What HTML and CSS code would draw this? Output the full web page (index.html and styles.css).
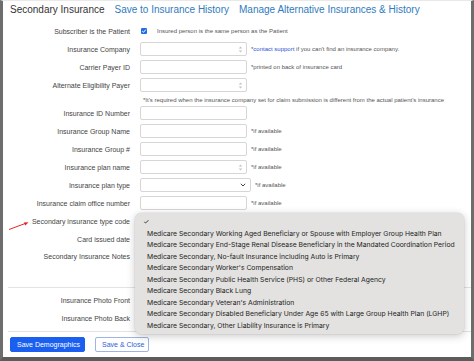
FILE: index.html
```html
<!DOCTYPE html>
<html>
<head>
<meta charset="utf-8">
<link rel="stylesheet" href="styles.css">
</head>
<body>
<div class="window">
  <div class="head">
    <span class="title">Secondary Insurance</span>
    <a class="hlink">Save to Insurance History</a>
    <a class="hlink">Manage Alternative Insurances &amp; History</a>
  </div>

  <div class="form">
    <div class="row">
      <div class="lbl">Subscriber is the Patient</div>
      <div class="fld">
        <span class="cb"><svg viewBox="0 0 6 6" width="6" height="6"><path d="M1.2 3.1 L2.5 4.3 L4.8 1.6" fill="none" stroke="#fff" stroke-width="1"/></svg></span>
        <span class="note">Insured person is the same person as the Patient</span>
      </div>
    </div>
    <div class="row">
      <div class="lbl">Insurance Company</div>
      <div class="fld"><span class="inp"><svg class="ud" viewBox="0 0 5 7" width="5" height="7"><path d="M2.5 0.5 L4.3 2.6 H0.7 Z M2.5 6.5 L4.3 4.4 H0.7 Z" fill="#c4c4c4"/></svg></span><span class="note"><i>*</i><span class="blue">contact support</span> if you can't find an insurance company.</span></div>
    </div>
    <div class="row">
      <div class="lbl">Carrier Payer ID</div>
      <div class="fld"><span class="inp"></span><span class="note">*printed on back of insurance card</span></div>
    </div>
    <div class="row">
      <div class="lbl">Alternate Eligibility Payer</div>
      <div class="fld"><span class="inp"><svg class="ud" viewBox="0 0 5 7" width="5" height="7"><path d="M2.5 0.5 L4.3 2.6 H0.7 Z M2.5 6.5 L4.3 4.4 H0.7 Z" fill="#c4c4c4"/></svg></span></div>
    </div>
    <div class="subnote">*It's required when the insurance company set for claim submission is different from the actual patient's insurance</div>
    <div class="row">
      <div class="lbl">Insurance ID Number</div>
      <div class="fld"><span class="inp"></span></div>
    </div>
    <div class="row">
      <div class="lbl">Insurance Group Name</div>
      <div class="fld"><span class="inp"></span><span class="note">*if available</span></div>
    </div>
    <div class="row">
      <div class="lbl">Insurance Group #</div>
      <div class="fld"><span class="inp"></span><span class="note">*if available</span></div>
    </div>
    <div class="row">
      <div class="lbl">Insurance plan name</div>
      <div class="fld"><span class="inp"><svg class="ud" viewBox="0 0 5 7" width="5" height="7"><path d="M2.5 0.5 L4.3 2.6 H0.7 Z M2.5 6.5 L4.3 4.4 H0.7 Z" fill="#c4c4c4"/></svg></span><span class="note">*if available</span></div>
    </div>
    <div class="row">
      <div class="lbl">Insurance plan type</div>
      <div class="fld"><span class="inp sel"><svg class="chev" viewBox="0 0 6 4" width="6" height="4"><path d="M0.8 0.8 L3 3 L5.2 0.8" fill="none" stroke="#444" stroke-width="1"/></svg></span><span class="note">*if available</span></div>
    </div>
    <div class="row">
      <div class="lbl">Insurance claim office number</div>
      <div class="fld"><span class="inp"></span><span class="note">*if available</span></div>
    </div>
    <div class="row">
      <div class="lbl">Secondary insurance type code</div>
      <div class="fld"><span class="inp sel"></span></div>
    </div>
    <div class="row">
      <div class="lbl">Card issued date</div>
      <div class="fld"><span class="inp"></span></div>
    </div>
    <div class="row notes">
      <div class="lbl">Secondary Insurance Notes</div>
      <div class="fld"><span class="ta"></span></div>
    </div>
  </div>

  <div class="form photos">
    <div class="row">
      <div class="lbl">Insurance Photo Front</div>
      <div class="fld"></div>
    </div>
    <div class="row">
      <div class="lbl">Insurance Photo Back</div>
      <div class="fld"></div>
    </div>
  </div>

  <div class="actions">
    <button class="btn primary">Save Demographics</button>
    <button class="btn outline">Save &amp; Close</button>
  </div>

  <svg class="arrow" viewBox="0 0 22 10" width="22" height="10"><path d="M1 8.5 L18 2.2" stroke="#e0282a" stroke-width="1" fill="none"/><path d="M20.5 1.2 L15.8 1.4 L17.4 4.6 Z" fill="#e0282a"/></svg>

  <div class="menu">
    <div class="mi check">✓</div>
    <div class="mi">Medicare Secondary Working Aged Beneficiary or Spouse with Employer Group Health Plan</div>
    <div class="mi">Medicare Secondary End-Stage Renal Disease Beneficiary in the Mandated Coordination Period</div>
    <div class="mi">Medicare Secondary, No-fault Insurance including Auto is Primary</div>
    <div class="mi">Medicare Secondary Worker's Compensation</div>
    <div class="mi">Medicare Secondary Public Health Service (PHS) or Other Federal Agency</div>
    <div class="mi">Medicare Secondary Black Lung</div>
    <div class="mi">Medicare Secondary Veteran's Administration</div>
    <div class="mi">Medicare Secondary Disabled Beneficiary Under Age 65 with Large Group Health Plan (LGHP)</div>
    <div class="mi">Medicare Secondary, Other Liability Insurance is Primary</div>
  </div>
</div>
</body>
</html>
```

FILE: styles.css
```css
* { box-sizing: border-box; }
html, body { margin: 0; padding: 0; }
body {
  width: 474px;
  height: 361px;
  overflow: hidden;
  font-family: "Liberation Sans", Arial, sans-serif;
  background: #5e5e5e;
}
.window {
  position: relative;
  width: 474px;
  height: 361px;
  background: #fff;
  border-left: 3px solid #6d6d6d;
  border-right: 3px solid #6d6d6d;
  border-top: 1px solid #e9e9e9;
  border-bottom: 4px solid #5c5c5c;
}
.head {
  display: flex;
  align-items: center;
  gap: 10px;
  height: 16px;
  padding: 2px 0 0 7px;
  font-size: 10px;
  line-height: 12px;
}
.title { color: #333; }
.hlink { color: #2f7bc0; }

.form {
  margin-top: 5px;
}
.row {
  display: grid;
  grid-template-columns: 127px 1fr;
  column-gap: 10px;
  height: 18px;
  align-items: center;
}
.lbl {
  text-align: right;
  font-size: 7px;
  color: #444;
  white-space: nowrap;
}
.fld {
  display: flex;
  align-items: center;
  gap: 4px;
  min-width: 0;
}
.inp {
  position: relative;
  display: flex;
  align-items: center;
  justify-content: flex-end;
  width: 107px;
  height: 14px;
  border: 1px solid #d6d6d6;
  border-radius: 2px;
  background: #fff;
  padding-right: 3px;
  flex: none;
}
.inp.sel { width: 111px; padding-right: 4px; }
.ud { display: block; }
.chev { display: block; }
.note {
  font-size: 6px;
  color: #555;
  white-space: nowrap;
}
.note i { font-style: normal; }
.blue { color: #2753d6; }
.cb {
  display: flex;
  align-items: center;
  justify-content: center;
  width: 6px;
  height: 6px;
  margin: 0 6px 0 1px;
  border-radius: 1px;
  background: #1f6fe6;
}
.cb svg { display: block; }
.subnote {
  height: 10px;
  padding: 3px 0 0 140px;
  font-size: 6px;
  line-height: 7px;
  color: #555;
  white-space: nowrap;
}
.row.notes {
  height: 36px;
  align-items: start;
}
.row.notes .lbl { line-height: 18px; }
.ta {
  display: block;
  width: 200px;
  height: 32px;
  margin-top: 2px;
  border: 1px solid #d6d6d6;
  border-radius: 2px;
}
.photos {
  margin: 3px 0 0 5px;
  padding: 3px 0 4px;
  border-top: 1px solid #e3e3e3;
  border-bottom: 1px solid #e3e3e3;
}
.photos .row { grid-template-columns: 122px 1fr; }
.actions {
  display: flex;
  gap: 10px;
  padding: 5px 0 0 7px;
}
.btn {
  height: 15px;
  padding: 0 6px;
  font-family: "Liberation Sans", Arial, sans-serif;
  font-size: 7px;
  line-height: 13px;
  border-radius: 2px;
  white-space: nowrap;
  cursor: pointer;
}
.btn.primary {
  background: #1a5ff0;
  color: #fff;
  border: 1px solid #1a5ff0;
  width: 75px;
}
.btn.outline {
  background: #fff;
  color: #2b62d6;
  border: 1px solid #9db5e6;
  width: 54px;
}
.arrow {
  position: absolute;
  left: 5px;
  top: 220px;
}
.menu {
  position: absolute;
  left: 132px;
  top: 212px;
  width: 329px;
  height: 121px;
  padding: 3px 0 0 0;
  background: #e3e2e0;
  border-radius: 6px;
  box-shadow: 0 2px 8px rgba(0, 0, 0, 0.22), 0 0 0 0.5px rgba(0, 0, 0, 0.08);
  font-family: Inter, "Liberation Sans", sans-serif;
  font-size: 6.8px;
  color: #222;
}
.mi {
  height: 11.5px;
  line-height: 11.5px;
  padding-left: 12px;
  white-space: nowrap;
}
.mi.check {
  padding-left: 8px;
  font-size: 7px;
}
```
